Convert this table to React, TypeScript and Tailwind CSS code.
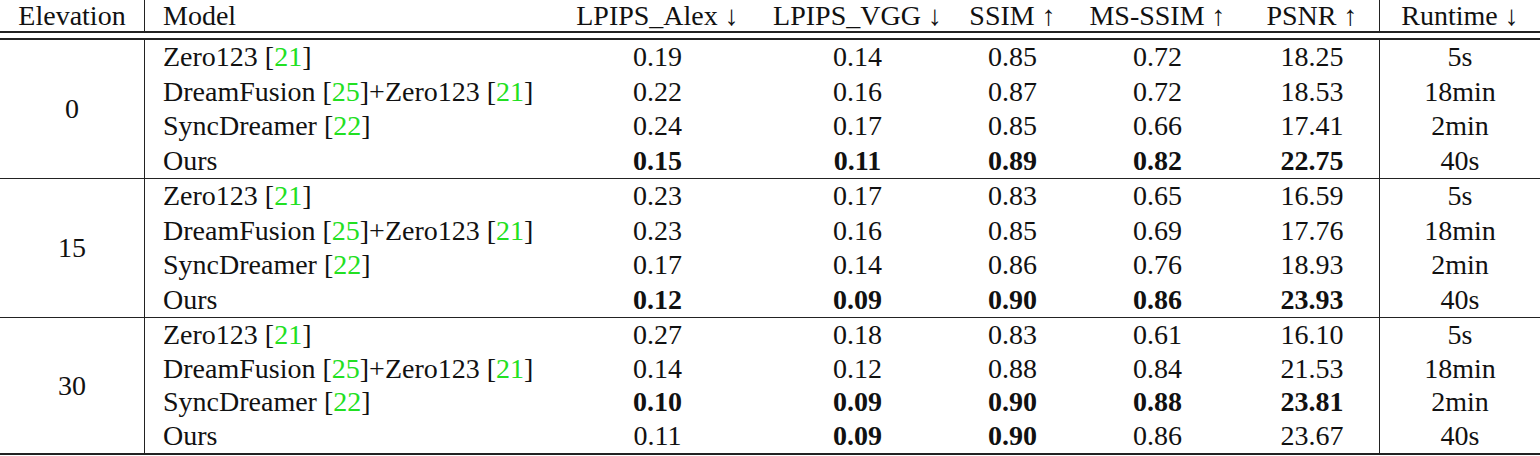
import React from 'react';

type Cell = { v: string; b?: boolean };
type Row = { model: React.ReactNode; cells: Cell[]; time: string };

const cols = 'grid grid-cols-[145px_410px_205px_195px_115px_175px_135px_160px]';

const Cite = ({ n }: { n: number }) => (
  <>
    [<span className="text-[#22e022]">{n}</span>]
  </>
);

const zero = <>Zero123 <Cite n={21} /></>;
const dream = <>DreamFusion <Cite n={25} />+Zero123 <Cite n={21} /></>;
const sync = <>SyncDreamer <Cite n={22} /></>;

const c = (s: string): Cell => ({ v: s });
const b = (s: string): Cell => ({ v: s, b: true });

const sections: { elev: string; rows: Row[] }[] = [
  {
    elev: '0',
    rows: [
      { model: zero, cells: [c('0.19'), c('0.14'), c('0.85'), c('0.72'), c('18.25')], time: '5s' },
      { model: dream, cells: [c('0.22'), c('0.16'), c('0.87'), c('0.72'), c('18.53')], time: '18min' },
      { model: sync, cells: [c('0.24'), c('0.17'), c('0.85'), c('0.66'), c('17.41')], time: '2min' },
      { model: 'Ours', cells: [b('0.15'), b('0.11'), b('0.89'), b('0.82'), b('22.75')], time: '40s' },
    ],
  },
  {
    elev: '15',
    rows: [
      { model: zero, cells: [c('0.23'), c('0.17'), c('0.83'), c('0.65'), c('16.59')], time: '5s' },
      { model: dream, cells: [c('0.23'), c('0.16'), c('0.85'), c('0.69'), c('17.76')], time: '18min' },
      { model: sync, cells: [c('0.17'), c('0.14'), c('0.86'), c('0.76'), c('18.93')], time: '2min' },
      { model: 'Ours', cells: [b('0.12'), b('0.09'), b('0.90'), b('0.86'), b('23.93')], time: '40s' },
    ],
  },
  {
    elev: '30',
    rows: [
      { model: zero, cells: [c('0.27'), c('0.18'), c('0.83'), c('0.61'), c('16.10')], time: '5s' },
      { model: dream, cells: [c('0.14'), c('0.12'), c('0.88'), c('0.84'), c('21.53')], time: '18min' },
      { model: sync, cells: [b('0.10'), b('0.09'), b('0.90'), b('0.88'), b('23.81')], time: '2min' },
      { model: 'Ours', cells: [c('0.11'), b('0.09'), b('0.90'), c('0.86'), c('23.67')], time: '40s' },
    ],
  },
];

const headers = ['LPIPS_Alex ↓', 'LPIPS_VGG ↓', 'SSIM ↑', 'MS-SSIM ↑'];

export default function App() {
  return (
    <div className="w-[1540px] h-[456px] bg-white text-[#111] text-[28px] leading-none font-[family-name:'Liberation_Serif','Times_New_Roman',serif] overflow-hidden">
      {/* header */}
      <div className={`${cols} h-[31px] items-center`}>
        <div className="h-full flex items-center justify-center border-r border-[#222]">Elevation</div>
        <div className="pl-[18px]">Model</div>
        {headers.map((h) => (
          <div key={h} className="text-center">{h}</div>
        ))}
        <div className="h-full flex items-center justify-center border-r border-[#222]">PSNR ↑</div>
        <div className="text-center">Runtime ↓</div>
      </div>

      {/* double rule */}
      <div className="h-[9px] border-y-2 border-[#222]" />

      {sections.map((s, si) => (
        <div
          key={s.elev}
          className={`${cols} ${si > 0 ? 'border-t border-[#222]' : ''} ${
            si === 2 ? 'grid-rows-[repeat(4,33.75px)]' : 'grid-rows-[repeat(4,34.5px)]'
          }`}
        >
          <div className="row-span-4 flex items-center justify-center border-r border-[#222]">{s.elev}</div>
          {s.rows.map((r, ri) => (
            <React.Fragment key={ri}>
              <div className="flex items-center pl-[18px] whitespace-nowrap">{r.model}</div>
              {r.cells.map((x, ci) => (
                <div
                  key={ci}
                  className={`flex items-center justify-center ${x.b ? 'font-bold' : ''} ${
                    ci === 4 ? 'border-r border-[#222]' : ''
                  }`}
                >
                  {x.v}
                </div>
              ))}
              <div className="flex items-center justify-center">{r.time}</div>
            </React.Fragment>
          ))}
        </div>
      ))}
      <div className="border-t-2 border-[#222]" />
    </div>
  );
}
